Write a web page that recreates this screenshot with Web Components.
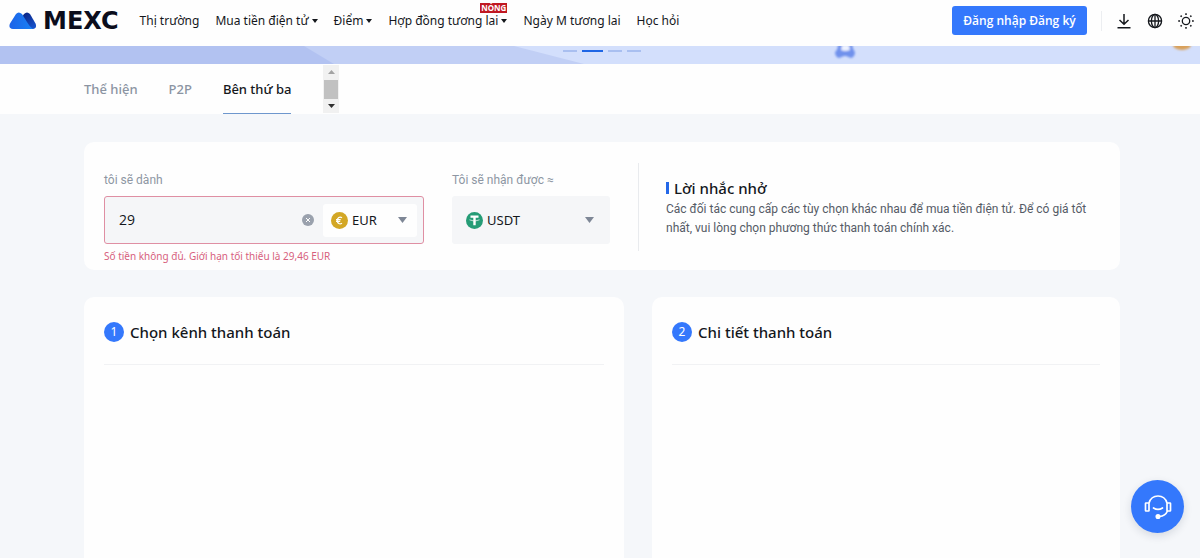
<!DOCTYPE html>
<html lang="vi">
<head>
<meta charset="utf-8">
<meta name="viewport" content="width=device-width, initial-scale=1">
<title>MEXC</title>
<style>
  body { margin: 0; background: #f5f7fa; color: #14171c; font-family: "Noto Sans", "Open Sans", sans-serif; font-size: 12px; line-height: 18px; }
</style>
</head>
<body>
<mexc-page></mexc-page>

<template id="t-page">
  <style>
    :host { display: flex; flex-direction: column; min-height: 100vh; }
    main { flex: 1; display: flex; flex-direction: column; gap: 27px; padding: 28px 80px 0 84px; }
    .panels { flex: 1; display: grid; grid-template-columns: 540fr 468fr; gap: 28px; }
  </style>
  <mexc-header></mexc-header>
  <mexc-banner></mexc-banner>
  <mexc-tabs></mexc-tabs>
  <main>
    <mexc-form></mexc-form>
    <div class="panels">
      <mexc-panel step="1">Chọn kênh thanh toán</mexc-panel>
      <mexc-panel step="2">Chi tiết thanh toán</mexc-panel>
    </div>
  </main>
  <mexc-support></mexc-support>
</template>

<template id="t-header">
  <style>
    :host { display: flex; align-items: center; height: 46px; padding: 0 6px 5px 9px; box-sizing: border-box; background: #fefefe; }
    .logo { display: flex; align-items: center; gap: 6px; color: #0b0d1c; text-decoration: none; font: bold 24px/24px "DejaVu Sans", sans-serif; }
    nav { display: flex; gap: 16px; margin-left: 21px; white-space: nowrap; }
    .right { display: flex; align-items: center; margin-left: auto; }
    .login { height: 29px; width: 135px; padding: 0; border: 0; border-radius: 3px; background: #3478fc; color: #fff; font: 600 12px/18px "Open Sans", sans-serif; white-space: nowrap; }
    .rule { width: 1px; height: 20px; margin: 0 14px; background: #eceef1; }
    .icons { display: flex; gap: 15px; }
    .icon { display: block; padding: 0; border: 0; background: none; width: 16px; height: 16px; color: #14171c; }
    .icon svg { display: block; }
  </style>
  <a class="logo" href="#">
    <svg width="28" height="18" viewBox="0 0 28 18" aria-hidden="true">
      <defs>
        <linearGradient id="a" x1="0" y1="0" x2="1" y2="0"><stop offset="0" stop-color="#1d63e8"/><stop offset="1" stop-color="#1781f5"/></linearGradient>
        <linearGradient id="b" x1="0" y1="0" x2=".6" y2="1"><stop offset="0" stop-color="#071f7d"/><stop offset="1" stop-color="#1750c8"/></linearGradient>
      </defs>
      <path fill="url(#b)" d="M13 5l2-3q3-3 6 0l5.500 9.500q2 5-3 5.500H13z"/>
      <path fill="url(#a)" d="M4 17q-5-.5-3-5.500L7 2q2.500-3 6 0l5 8q2 4 6 7z"/>
    </svg>
    MEXC
  </a>
  <nav>
    <mexc-link>Thị trường</mexc-link>
    <mexc-link menu>Mua tiền điện tử</mexc-link>
    <mexc-link menu>Điểm</mexc-link>
    <mexc-link menu badge="NÓNG">Hợp đồng tương lai</mexc-link>
    <mexc-link>Ngày M tương lai</mexc-link>
    <mexc-link>Học hỏi</mexc-link>
  </nav>
  <div class="right">
    <button class="login">Đăng nhập Đăng ký</button>
    <span class="rule"></span>
    <div class="icons">
      <button class="icon" aria-label="Tải xuống"><svg width="16" height="16" viewBox="0 0 16 16" fill="none" stroke="currentColor" stroke-width="1.500"><path d="M8 1v10M3.500 7L8 11.300 12.500 7M1.500 14.700h13"/></svg></button>
      <button class="icon" aria-label="Ngôn ngữ"><svg width="16" height="16" viewBox="0 0 16 16" fill="none" stroke="currentColor" stroke-width="1.300"><circle cx="8" cy="8" r="6.600"/><path d="M1.400 8h13.200M8 1.400v13.200"/><ellipse cx="8" cy="8" rx="3.600" ry="6.600"/></svg></button>
      <button class="icon" aria-label="Giao diện"><svg width="16" height="16" viewBox="0 0 16 16" fill="none" stroke="currentColor" stroke-width="1.300"><circle cx="8" cy="8" r="3.700"/><path stroke-width="1.500" d="M8 .2v1.800M8 14v1.800M.2 8H2M14 8h1.800M2.600 2.600l1.100 1.100M12.300 12.300l1.100 1.100M2.600 13.400l1.100-1.100M12.300 3.700l1.100-1.100"/></svg></button>
    </div>
  </div>
</template>

<template id="t-link">
  <style>
    :host { display: block; position: relative; }
    a { display: flex; align-items: center; gap: 3px; color: inherit; text-decoration: none; }
    svg { display: none; }
    :host([menu]) svg { display: block; }
    .badge { position: absolute; right: 0; top: -9px; padding: 0 1px; background: #c01822; color: #fff; font-size: 8px; font-weight: 700; line-height: 10px; }
    .badge:empty { display: none; }
  </style>
  <a href="#"><slot></slot><svg width="6" height="4" viewBox="0 0 6 4" aria-hidden="true"><path d="M0 0h6L3 4z" fill="currentColor"/></svg></a>
  <span class="badge"></span>
</template>

<template id="t-banner">
  <style>
    :host { display: block; position: relative; height: 18px; overflow: hidden; background: #d3dffc; }
    svg { display: block; width: 100%; height: 18px; }
    .dots { position: absolute; top: 4px; left: 563px; display: flex; gap: 5px; }
    .dots i { width: 14px; height: 2px; background: #a9bff0; }
    .dots .on { width: 21px; background: #1f66e5; }
  </style>
  <svg viewBox="0 0 1200 18" preserveAspectRatio="none" aria-hidden="true">
    <defs><filter id="f"><feGaussianBlur stdDeviation=".8"/></filter></defs>
    <path fill="#c1cff5" d="M0 0h514l70 18H0z"/>
    <path fill="#b2c2f1" d="M0 0h304l30 18H0z"/>
    <g filter="url(#f)">
      <path fill="#6f91ec" d="M838-2h14q1 6 3 8 0 5-4 6l-5-2h-2l-5 2q-4-1-4-6 3-2 3-8z"/>
      <path fill="#edf2ff" d="M842-1h7l1 5q-5 2-9 0z"/>
      <ellipse cx="1182" cy="-1" rx="9" ry="5" fill="#d9a05a"/>
    </g>
  </svg>
  <div class="dots"><i></i><i class="on"></i><i></i><i></i></div>
</template>

<template id="t-tabs">
  <style>
    :host { display: flex; height: 50px; padding-left: 84px; background: #fefefe; }
    nav { display: flex; gap: 31px; white-space: nowrap; }
    a { box-sizing: border-box; height: 50px; padding-top: 15px; color: #8b94a2; text-decoration: none; font-size: 13px; font-weight: 500; line-height: 20px; }
    .on { color: #14171c; border-bottom: 1px solid #6e97cd; }
    .bar { display: flex; flex-direction: column; align-items: center; justify-content: space-between; width: 16px; height: 48px; margin: 1px 0 0 32px; background: #f1f1f1; }
    .bar svg { display: block; margin: 5px 0; }
    .thumb { width: 14px; height: 19px; background: #c1c1c1; }
  </style>
  <nav><a href="#">Thể hiện</a><a href="#">P2P</a><a href="#" class="on">Bên thứ ba</a></nav>
  <div class="bar" aria-hidden="true">
    <svg width="7" height="4" viewBox="0 0 7 4"><path d="M0 4h7L3.500 0z" fill="#a3a3a3"/></svg>
    <span class="thumb"></span>
    <svg width="7" height="4" viewBox="0 0 7 4"><path d="M0 0h7L3.500 4z" fill="#303030"/></svg>
  </div>
</template>

<template id="t-form">
  <style>
    :host { display: flex; box-sizing: border-box; min-height: 128px; padding: 21px 20px 4px; background: #fefefe; border-radius: 10px; }
    .pay { width: 320px; flex: none; }
    .get { width: 158px; flex: none; margin-left: 28px; }
    label { display: block; padding: 8px 0 7px; color: #8d96a3; font-family: Roboto, sans-serif; line-height: 18px; }
    .box { display: flex; align-items: center; box-sizing: border-box; height: 48px; background: #f5f6f8; border-radius: 3px; }
    .pay .box { border: 1px solid #df8fa3; padding-right: 6px; }
    input { flex: 1; min-width: 0; border: 0; padding: 0 0 0 14px; background: none; outline: 0; color: #14171c; font: 14px/20px "Open Sans", sans-serif; }
    .clear { width: 12px; height: 12px; padding: 0; border: 0; background: none; margin-right: 9px; }
    .clear svg { display: block; }
    .pay mexc-select { width: 94px; height: 33px; background: #fefefe; border-radius: 3px; }
    .get mexc-select { width: 100%; height: 48px; --pad: 14px; }
    .err { margin: 4px 0 0; color: #d75f7d; font-family: "Noto Sans", sans-serif; font-size: 10px; line-height: 16px; white-space: nowrap; }
    .tip { flex: 1; margin-left: 28px; padding: 15px 0 0 27px; height: 88px; box-sizing: border-box; border-left: 1px solid #e9ebee; }
    h2 { display: flex; align-items: center; gap: 5px; margin: 0; font-size: 15px; font-weight: 500; line-height: 20px; }
    h2 i { width: 3px; height: 12px; background: #2468e8; }
    p { margin: 2px 0 0; color: #555b66; font-family: Roboto, sans-serif; line-height: 19px; }
  </style>
  <div class="pay">
    <label for="amount">tôi sẽ dành</label>
    <div class="box">
      <input id="amount" value="29">
      <button class="clear" aria-label="Xóa"><svg width="12" height="12" viewBox="0 0 12 12"><circle cx="6" cy="6" r="6" fill="#9aa1ad"/><path d="M4 4l4 4M8 4l-4 4" stroke="#fff"/></svg></button>
      <mexc-select><svg slot="icon" width="17" height="17" viewBox="0 0 17 17"><circle cx="8.500" cy="8.500" r="8.500" fill="#d3a725"/><path d="M11 5.800C8.700 4.300 6.300 5.700 6.300 8.500s2.400 4.200 4.700 2.700M5 7.600h4.700M5 9.400h4.200" fill="none" stroke="#fff" stroke-width="1.300"/></svg><select aria-label="Tiền tệ"><option>EUR</option></select></mexc-select>
    </div>
    <p class="err">Số tiền không đủ. Giới hạn tối thiểu là 29,46 EUR</p>
  </div>
  <div class="get">
    <label for="coin">Tôi sẽ nhận được ≈</label>
    <div class="box">
      <mexc-select><svg slot="icon" width="17" height="17" viewBox="0 0 17 17"><circle cx="8.500" cy="8.500" r="8.500" fill="#259c76"/><path d="M4.500 3.600h8v2.200H9.700v7.400H7.300V5.800H4.500z" fill="#fff"/><path d="M3.500 7.800q5 2.800 10 0" fill="none" stroke="#fff" stroke-width=".7"/></svg><select id="coin"><option>USDT</option></select></mexc-select>
    </div>
  </div>
  <div class="tip">
    <h2><i></i>Lời nhắc nhở</h2>
    <p>Các đối tác cung cấp các tùy chọn khác nhau để mua tiền điện tử. Để có giá tốt nhất, vui lòng chọn phương thức thanh toán chính xác.</p>
  </div>
</template>

<template id="t-select">
  <style>
    :host { display: grid; grid-template-columns: auto 1fr; grid-template-rows: 100%; align-items: center; box-sizing: border-box; }
    .icon { grid-area: 1 / 1; display: flex; padding-left: var(--pad, 8px); }
    ::slotted(select) { grid-area: 1 / 2; width: 100%; height: 100%; appearance: none; border: 0; padding: 0 0 0 4px; background: none; outline: 0; color: #14171c; font: 13px/20px "Noto Sans", sans-serif; }
    .arrow { grid-area: 1 / 2; justify-self: end; margin-right: calc(var(--pad, 8px) + 2px); pointer-events: none; }
  </style>
  <span class="icon"><slot name="icon"></slot></span>
  <slot></slot>
  <svg class="arrow" width="9" height="6" viewBox="0 0 9 6" aria-hidden="true"><path d="M0 0h9L4.500 6z" fill="#7e8796"/></svg>
</template>

<template id="t-panel">
  <style>
    :host { display: block; padding: 20px; background: #fefefe; border-radius: 10px 10px 0 0; }
    header { display: flex; align-items: center; gap: 6px; padding: 5px 0 22px; border-bottom: 1px solid #f1f2f4; }
    b { width: 20px; height: 20px; border-radius: 50%; background: #3478fc; color: #fff; text-align: center; font-size: 12px; font-weight: 400; line-height: 20px; }
    h2 { margin: 0; font-size: 15px; font-weight: 500; line-height: 20px; }
  </style>
  <header><b></b><h2><slot></slot></h2></header>
</template>

<template id="t-support">
  <style>
    :host { display: block; position: fixed; right: 16px; bottom: 25px; }
    button { display: flex; align-items: center; justify-content: center; width: 53px; height: 53px; padding: 0; border: 0; border-radius: 50%; background: #3478fc; box-shadow: 0 3px 9px #1c2b4a24; }
  </style>
  <button aria-label="Hỗ trợ"><svg width="28" height="26" viewBox="0 0 28 26" fill="none" stroke="#fff" stroke-width="1.700"><path d="M5 9C6.500 4 10 2 14 2s7.500 2 9 7M23.500 17c-1.500 3.500-4 5.200-8 5.500"/><rect x="1.500" y="9" width="3.500" height="8" rx=".5"/><rect x="23" y="9" width="3.500" height="8" rx=".5"/><path stroke-linecap="round" d="M9.500 14q4.500 2.800 9 0"/><circle cx="14" cy="22.500" r="1.700" fill="#fff"/></svg></button>
</template>

<script>
  class Base extends HTMLElement {
    constructor() {
      super();
      const name = this.localName.replace('mexc-', 't-');
      this.attachShadow({ mode: 'open' }).append(document.getElementById(name).content.cloneNode(true));
    }
    $(s) { return this.shadowRoot.querySelector(s); }
  }
  customElements.define('mexc-link', class extends Base {
    connectedCallback() { this.$('.badge').textContent = this.getAttribute('badge') || ''; }
  });
  customElements.define('mexc-panel', class extends Base {
    connectedCallback() { this.$('b').textContent = this.getAttribute('step'); }
  });
  for (const n of ['select', 'header', 'banner', 'tabs', 'form', 'support', 'page'])
    customElements.define('mexc-' + n, class extends Base {});
</script>
</body>
</html>
